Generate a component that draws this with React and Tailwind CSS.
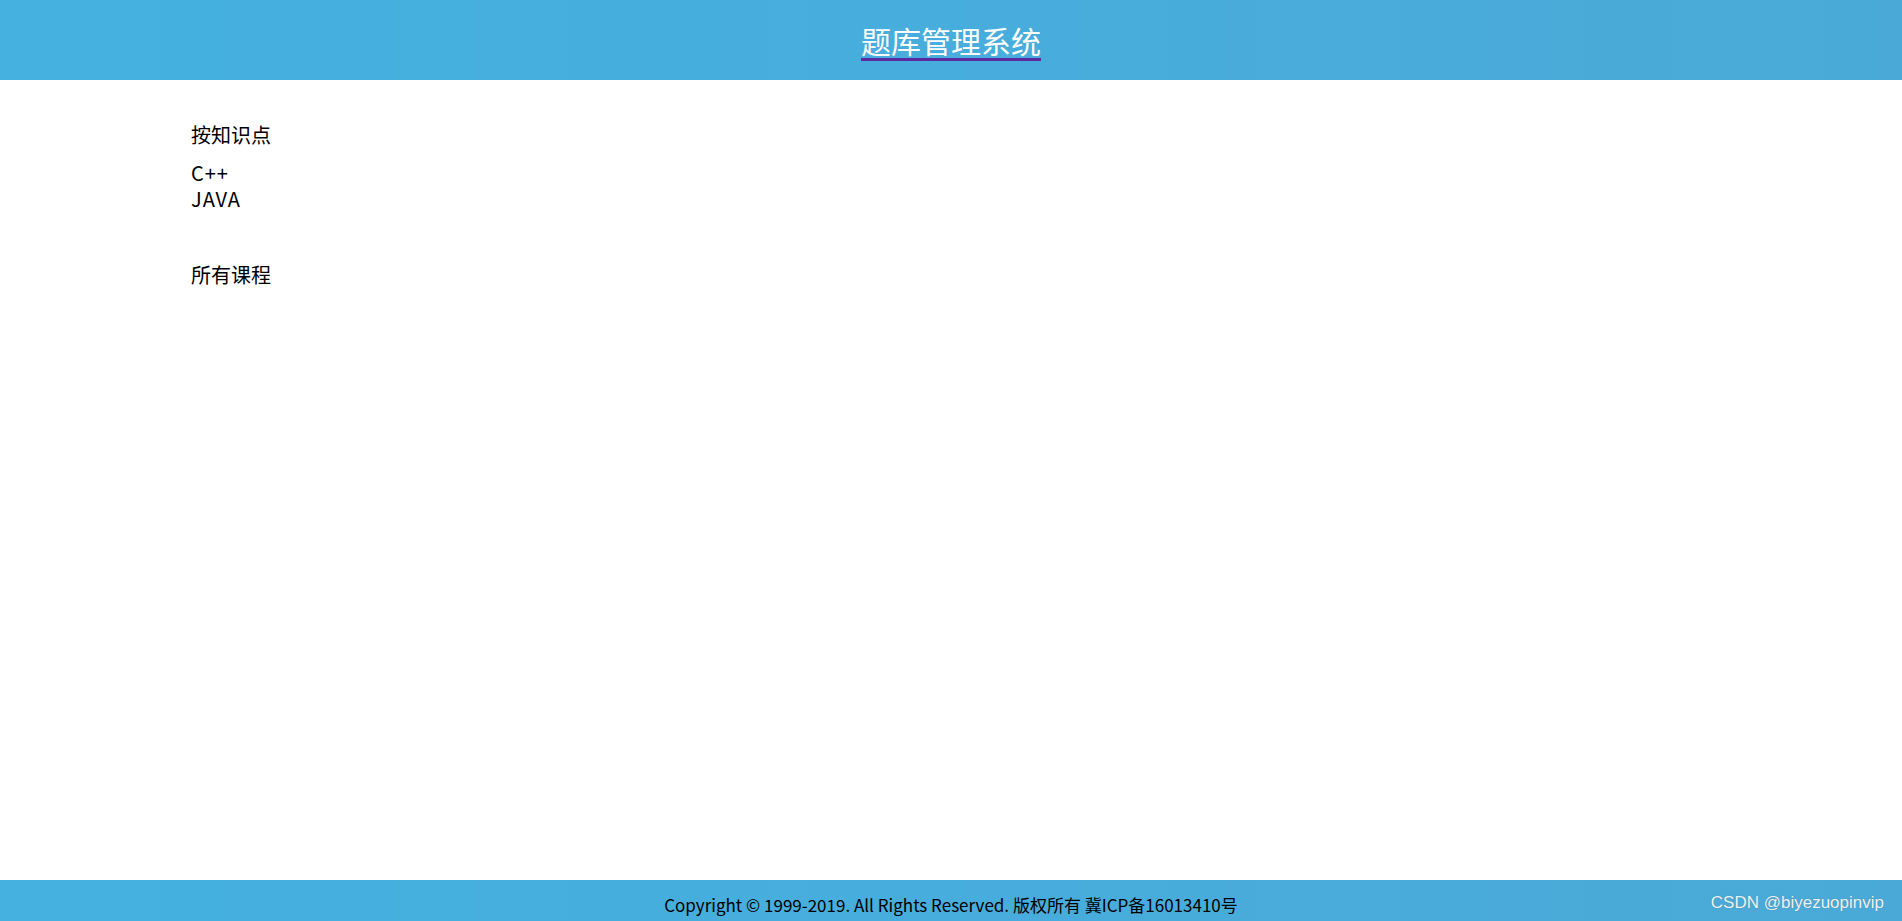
export default function App() {
  const cjk = { fontFamily: '"Noto Sans CJK SC", "Noto Sans", sans-serif' };
  return (
    <div className="min-h-[921px] flex flex-col bg-white" style={cjk}>
      <header className="h-[80px] bg-gradient-to-r from-[#44b1e1] to-[#4aa9d7] flex items-center justify-center">
        <a href="#" className="text-white text-[30px] leading-none underline decoration-[#5b2aa0] decoration-[3px] underline-offset-[5px]">
          题库管理系统
        </a>
      </header>
      <main className="flex-1 px-[191px] text-black text-[20px]">
        <div className="mt-[42px] leading-[25px]">按知识点</div>
        <div className="mt-[13px] leading-[26px]">
          <div className="tracking-[1px]">C++</div>
          <div className="tracking-[1px]">JAVA</div>
        </div>
        <div className="mt-[50px] leading-[25px]">所有课程</div>
      </main>
      <footer className="relative h-[41px] bg-gradient-to-r from-[#44b1e1] to-[#4aa9d7] flex items-center justify-center pt-[8px]">
        <span className="text-[17px] text-black">
          Copyright © 1999-2019. All Rights Reserved. 版权所有 冀ICP备16013410号
        </span>
        <span
          className="absolute right-[18px] top-[10px] text-[17px] text-[#e8f3f8]"
          style={{ fontFamily: '"Liberation Sans", Arial, sans-serif', textShadow: '0 0 1px #5a7a8a' }}
        >
          CSDN @biyezuopinvip
        </span>
      </footer>
    </div>
  );
}
